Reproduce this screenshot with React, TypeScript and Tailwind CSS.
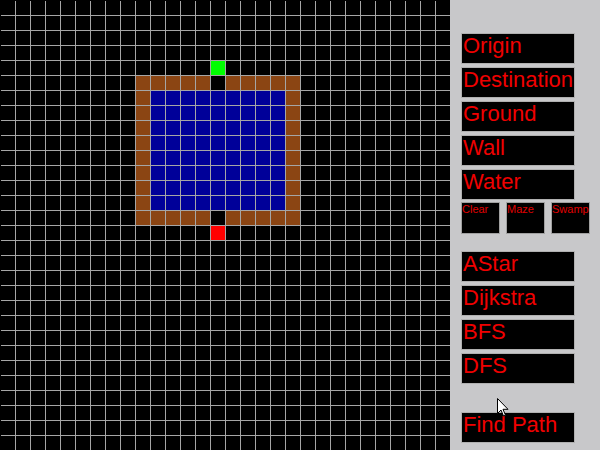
const COLS = 30;
const ROWS = 30;

// cell colour by [row, col]
function cellClass(r: number, c: number) {
  if (r === 4 && c === 14) return "bg-[#00ff00]";
  if (r === 15 && c === 14) return "bg-[#ff0000]";
  if ((r === 5 || r === 14) && c === 14) return "bg-black";
  if (r >= 6 && r <= 13 && c >= 10 && c <= 18) return "bg-[#000099]";
  if (r >= 5 && r <= 14 && c >= 9 && c <= 19) return "bg-[#8b4513]";
  return "bg-black";
}

function Board() {
  const cells = [];
  for (let r = 0; r < ROWS; r++) {
    for (let c = 0; c < COLS; c++) {
      cells.push(
        <div
          key={r + "-" + c}
          className={`border-r border-b border-[#a6a6a6] ${cellClass(r, c)}`}
        />
      );
    }
  }
  return (
    <div className="w-[450px] h-[450px] bg-black overflow-hidden shrink-0">
      <div className="grid grid-cols-[repeat(30,15px)] grid-rows-[repeat(30,15px)] ml-px mt-px">
        {cells}
      </div>
    </div>
  );
}

function BigButton({ label, className = "" }: { label: string; className?: string }) {
  return (
    <div
      className={`w-[114px] h-[31px] bg-black border border-[#b0b0b0] text-[#f00000] text-[22px] leading-[24px] pl-px ${className}`}
    >
      {label}
    </div>
  );
}

function SmallButton({ label }: { label: string }) {
  return (
    <div className="w-[39px] h-[32px] bg-black border border-[#a0a0a0] text-[#e00000] text-[11px] leading-[13px] whitespace-nowrap overflow-visible">
      {label}
    </div>
  );
}

export default function App() {
  return (
    <div
      className="relative flex w-[600px] h-[450px] overflow-hidden"
      style={{ fontFamily: "'Liberation Sans', Arial, sans-serif" }}
    >
      <Board />
      <div className="flex-1 h-[450px] bg-[#c8c8ca] pl-[11px] pt-[33px] flex flex-col">
        <div className="flex flex-col gap-[3px]">
          {["Origin", "Destination", "Ground", "Wall", "Water"].map((l) => (
            <BigButton key={l} label={l} />
          ))}
        </div>
        <div className="flex gap-[6px] mt-[2px]">
          {["Clear", "Maze", "Swamp"].map((l) => (
            <SmallButton key={l} label={l} />
          ))}
        </div>
        <div className="flex flex-col gap-[3px] mt-[17px]">
          {["AStar", "Dijkstra", "BFS", "DFS"].map((l) => (
            <BigButton key={l} label={l} />
          ))}
        </div>
        <BigButton label="Find Path" className="mt-[28px]" />
      </div>

      {/* mouse pointer */}
      <svg
        className="absolute left-[497px] top-[398px]"
        width="13"
        height="20"
        viewBox="0 0 13 20"
      >
        <path
          d="M0.5 0.5 L0.5 15.5 L4 12 L6.5 18 L8.5 17.2 L6 11.3 L11 11.3 Z"
          fill="white"
          stroke="black"
          strokeWidth="1"
        />
      </svg>
    </div>
  );
}
